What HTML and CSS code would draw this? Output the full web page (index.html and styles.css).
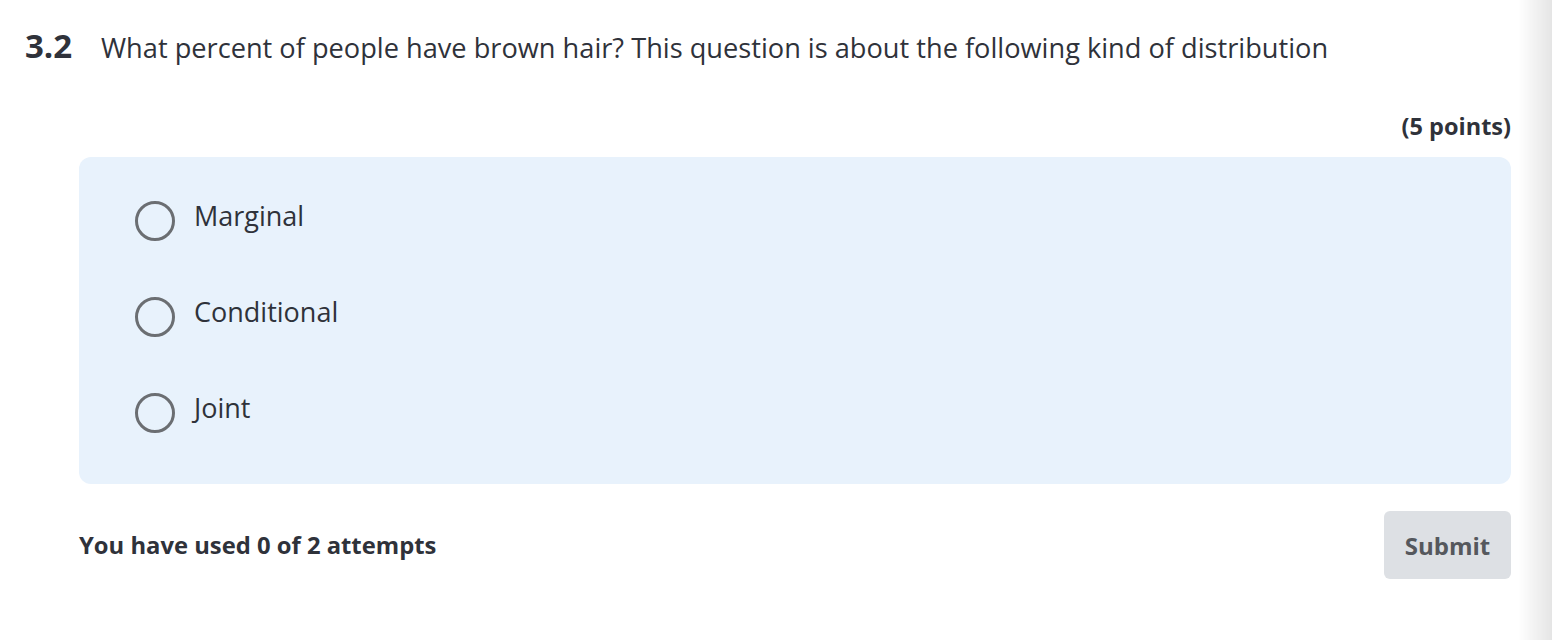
FILE: index.html
```html
<!DOCTYPE html>
<html lang="en">
<head>
  <meta charset="UTF-8" />
  <meta name="viewport" content="width=device-width, initial-scale=1.0" />
  <title>Question 3.2</title>
  <link rel="stylesheet" href="styles.css">
</head>
<body>

  <div class="problem">
    <h2 class="question">
      <span class="number">3.2</span>
      <span class="prompt">What percent of people have brown hair? This question is about the following kind of distribution</span>
    </h2>

    <div class="points">(5 points)</div>

    <div class="choices">
      <label class="choice">
        <input type="radio" name="dist" value="marginal">
        <span>Marginal</span>
      </label>
      <label class="choice">
        <input type="radio" name="dist" value="conditional">
        <span>Conditional</span>
      </label>
      <label class="choice">
        <input type="radio" name="dist" value="joint">
        <span>Joint</span>
      </label>
    </div>

    <div class="actions">
      <div class="attempts">You have used 0 of 2 attempts</div>
      <button class="submit" disabled>Submit</button>
    </div>
  </div>

  <div class="edge-shadow"></div>

</body>
</html>
```

FILE: styles.css
```css
body {
  font-family: "Open Sans", Arial, sans-serif;
  margin: 0;
  background: #fff;
  color: #2f323a;
}

.problem {
  padding: 23px 41px 0 25px;
}

.question {
  display: flex;
  align-items: baseline;
  margin: 0;
  font-weight: normal;
  line-height: 1.4;
}

.question .number {
  font-size: 33px;
  font-weight: 700;
  width: 76px;
  flex-shrink: 0;
}

.question .prompt {
  font-size: 27.2px;
}

.points {
  text-align: right;
  font-size: 23.5px;
  font-weight: 700;
  margin-top: 41px;
  line-height: 32px;
}

.choices {
  margin: 15px 0 0 54px;
  background-color: #e8f2fc;
  border-radius: 12px;
  padding: 44px 56px 51px;
  display: flex;
  flex-direction: column;
  gap: 56px;
}

.choice {
  display: flex;
  align-items: center;
  gap: 19px;
  font-size: 27px;
  height: 40px;
  cursor: pointer;
}

.choice span {
  margin-bottom: 11px;
}

.choice input {
  appearance: none;
  margin: 0;
  width: 40px;
  height: 40px;
  border: 3px solid #6b6e72;
  border-radius: 50%;
  background: transparent;
}

.actions {
  display: flex;
  justify-content: space-between;
  align-items: center;
  margin: 27px 0 0 54px;
}

.attempts {
  font-size: 23.8px;
  font-weight: 700;
}

.submit {
  font-family: "Open Sans", Arial, sans-serif;
  font-size: 24px;
  font-weight: 700;
  color: #55585d;
  background-color: #dde0e4;
  border: none;
  border-radius: 6px;
  width: 127px;
  height: 68px;
}

/* soft shadow down the right edge */
.edge-shadow {
  position: fixed;
  top: 0;
  right: 0;
  width: 34px;
  height: 100%;
  background: linear-gradient(to right, rgba(0,0,0,0), rgba(0,0,0,0.1));
  pointer-events: none;
}
```
